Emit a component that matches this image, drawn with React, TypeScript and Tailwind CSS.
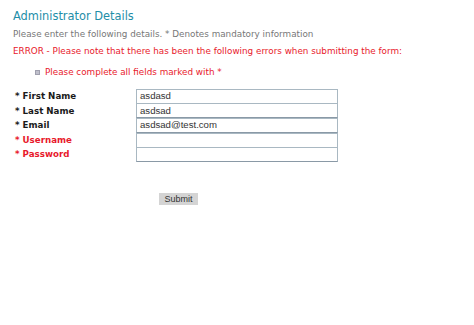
import React from "react";

const labelFont = { fontFamily: '"DejaVu Sans", Verdana, sans-serif' };

function Row({ label, value, red }: { label: string; value: string; red?: boolean }) {
  return (
    <div className="flex items-center h-[14.6px]">
      <div
        className={`w-[123px] pl-[2px] text-[8.7px] font-bold leading-none ${red ? "text-[#e8192c]" : "text-[#1a1a1a]"}`}
      >
        {label}
      </div>
      <div className="w-[202px] h-[15px] border border-[#a9b8c2] border-b-[#8a99a6] bg-white flex items-center px-[3px] text-[9.6px] text-[#333] font-['Liberation_Sans',Arial,sans-serif]">
        {value}
      </div>
    </div>
  );
}

export default function App() {
  return (
    <div className="w-[474px] h-[325px] bg-white px-[13px] pt-[8px]" style={labelFont}>
      <div className="text-[11.4px] leading-[16px] text-[#1e8ea8]">Administrator Details</div>
      <div className="mt-[4px] text-[8.8px] leading-[12px] text-[#777]">
        Please enter the following details. * Denotes mandatory information
      </div>
      <div className="mt-[5px] text-[8.8px] leading-[12px] text-[#e8192c]">
        ERROR - Please note that there has been the following errors when submitting the form:
      </div>
      <div className="mt-[9px] pl-[22px] flex items-center gap-[5px] text-[8.8px] leading-[12px] text-[#e8192c]">
        <span className="inline-block w-[5px] h-[5px] bg-[#c0c0cc] border border-[#a0a0ae]" />
        <span>Please complete all fields marked with *</span>
      </div>
      <div className="mt-[11px] flex flex-col">
        <Row label="* First Name" value="asdasd" />
        <Row label="* Last Name" value="asdsad" />
        <Row label="* Email" value="asdsad@test.com" />
        <Row label="* Username" value="" red />
        <Row label="* Password" value="" red />
      </div>
      <div className="mt-[31px] pl-[146px] flex">
        <button className="block w-[39px] h-[12px] bg-[#d4d4d4] text-[9px] leading-[12px] text-[#333] font-['Liberation_Sans',Arial,sans-serif]">
          Submit
        </button>
      </div>
    </div>
  );
}
